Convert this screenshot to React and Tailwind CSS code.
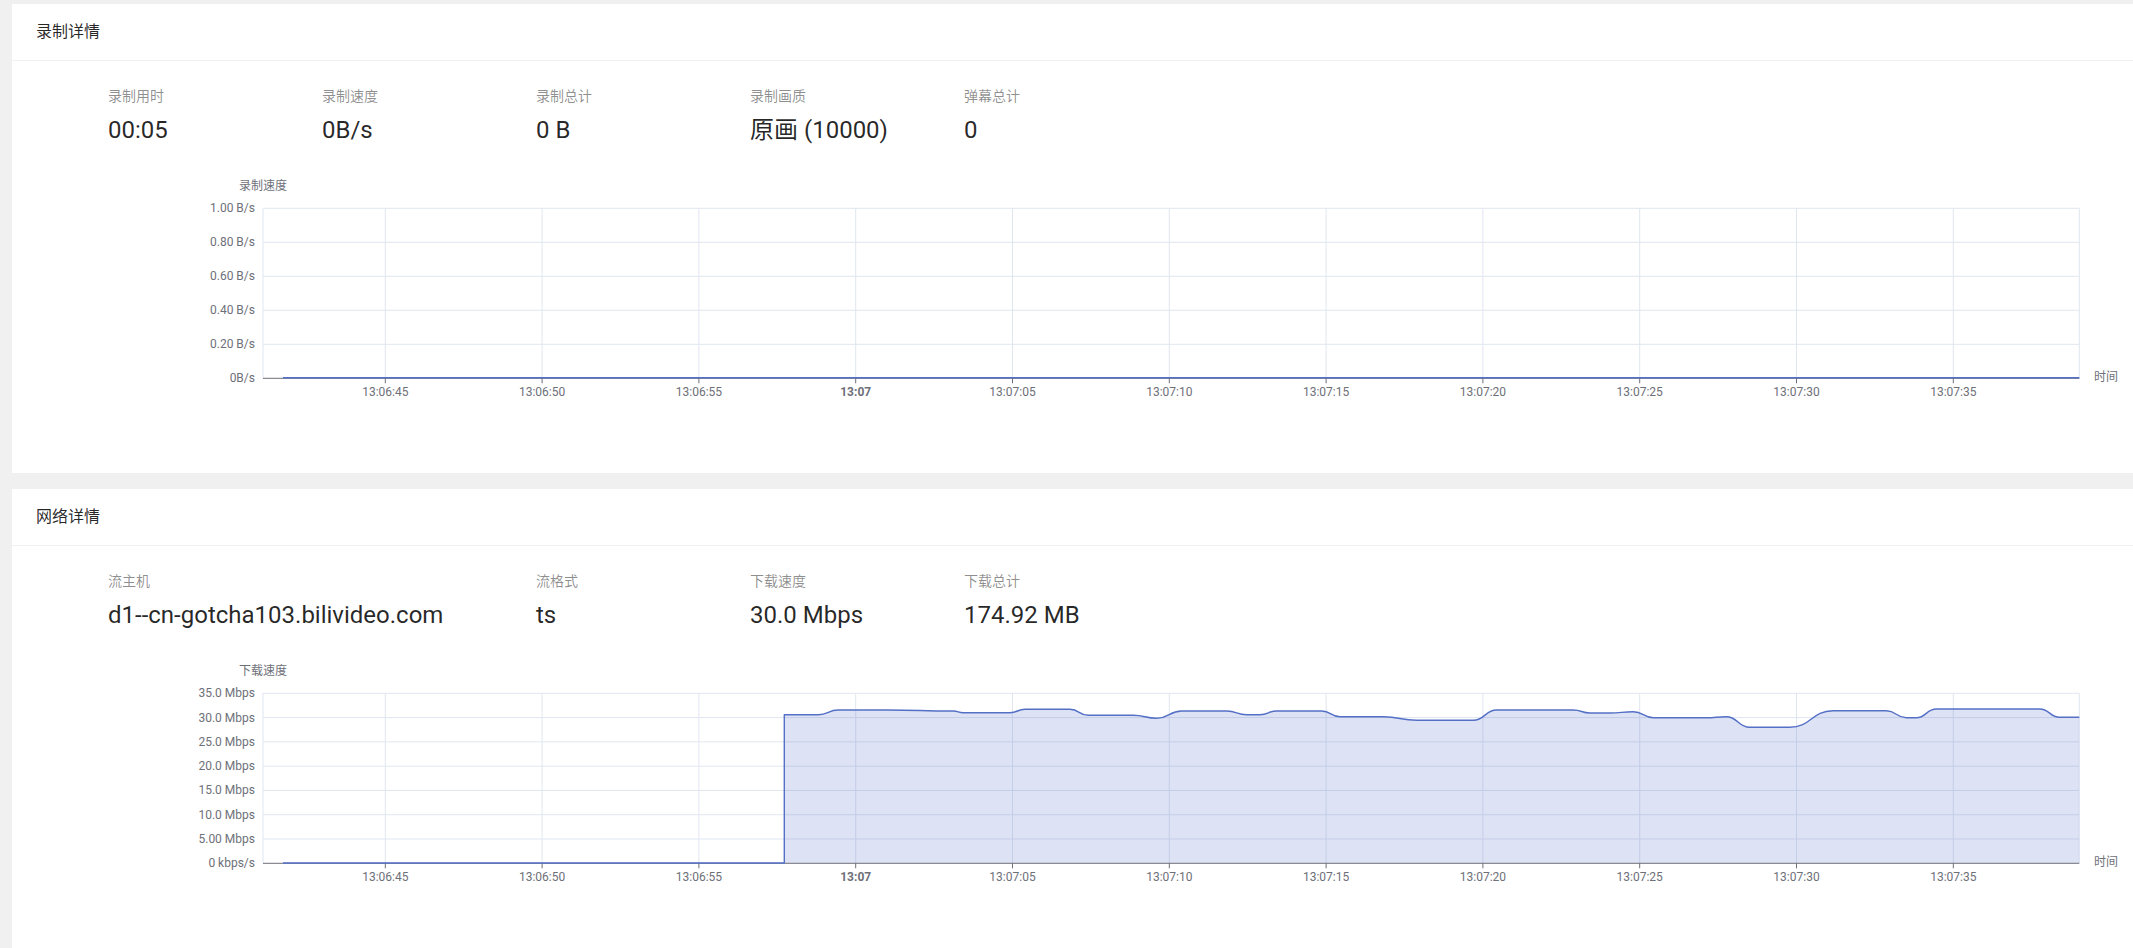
import React from "react";

const TICKS = ["13:06:45","13:06:50","13:06:55","13:07","13:07:05","13:07:10","13:07:15","13:07:20","13:07:25","13:07:30","13:07:35"];
const GL = 227, GR = 2043.3, GT = 59.3, GB = 229.3;
const tickX = (i) => 349.3 + i * 156.8;

const NODES = [
  [784.3,715.7],[818.3,715.7],[838.3,711],[886.7,711],[953.3,712],[963.3,713.7],[1010,713.7],
  [1025,710.3],[1070,710.3],[1088.3,716.3],[1133.3,716.3],[1156.7,719.3],[1181.7,712],[1226.7,712],
  [1246.7,715.7],[1260,715.7],[1276.7,712],[1321.7,712],[1340,717.7],[1383.3,717.7],[1416.7,721.3],
  [1473.3,721.3],[1496.7,711],[1573.3,711],[1590,714],[1610,714],[1633.3,712.7],[1653.3,718.7],
  [1706.3,718.7],[1726.3,717.7],[1749.7,728.3],[1789.7,728.3],[1833,711.7],[1886.3,711.7],
  [1906.3,718.7],[1916.3,718.7],[1936.3,710],[2039.7,710],[2059.7,718.3],[2079.3,718.3],
];

function buildLine() {
  let d = "M283 864 L784.3 864 L784.3 715.7";
  for (let i = 1; i < NODES.length; i++) {
    const [x0, y0] = NODES[i - 1];
    const [x1, y1] = NODES[i];
    if (y0 === y1) d += ` L${x1} ${y1}`;
    else {
      const m = (x0 + x1) / 2;
      d += ` C${m} ${y0} ${m} ${y1} ${x1} ${y1}`;
    }
  }
  return d;
}
const LINE = buildLine();
const AREA = LINE + " L2079.3 864 L283 864 Z";

function Chart({ name, yLabels, kind }) {
  const rows = yLabels.length - 1;
  const step = (GB - GT) / rows;
  return (
    <svg width="2073" height="300" viewBox="0 0 2073 300" className="block overflow-visible">
      {Array.from({ length: rows }).map((_, i) => (
        <line key={"h" + i} x1={GL} x2={GR} y1={GT + i * step} y2={GT + i * step} stroke="#E0E6F1" strokeWidth="1" />
      ))}
      {[GL, ...TICKS.map((_, i) => tickX(i)), GR].map((x, i) => (
        <line key={"v" + i} x1={x} x2={x} y1={GT} y2={GB} stroke="#E0E6F1" strokeWidth="1" />
      ))}
      {yLabels.map((l, i) => (
        <text key={"y" + i} x={219} y={GT + i * step} textAnchor="end" dominantBaseline="central" fontSize="12" fill="#6E7079">
          {l}
        </text>
      ))}
      <text x={GL} y={37} textAnchor="middle" dominantBaseline="central" fontSize="12" fill="#6E7079">{name}</text>
      {kind === "net" ? (
        <g transform="translate(-36,-635)">
          <path d={AREA} fill="#5470c6" fillOpacity="0.2" stroke="none" />
        </g>
      ) : null}
      <line x1={GL} x2={GR} y1={GB} y2={GB} stroke="#6E7079" strokeWidth="1" />
      {TICKS.map((_, i) => (
        <line key={"t" + i} x1={tickX(i)} x2={tickX(i)} y1={GB} y2={GB + 5} stroke="#6E7079" strokeWidth="1" />
      ))}
      {kind === "net" ? (
        <g transform="translate(-36,-635)">
          <path d={LINE} fill="none" stroke="#5470c6" strokeWidth="1.4" strokeLinejoin="round" />
        </g>
      ) : (
        <line x1={247} x2={GR} y1={GB - 0.5} y2={GB - 0.5} stroke="#5470c6" strokeWidth="1.5" />
      )}
      {TICKS.map((t, i) => (
        <text key={"x" + i} x={tickX(i)} y={GB + 13.5} textAnchor="middle" dominantBaseline="central" fontSize="12"
          fill="#6E7079" fontWeight={t === "13:07" ? 700 : 400}>
          {t}
        </text>
      ))}
      <text x={2058} y={GB - 1} dominantBaseline="central" fontSize="12" fill="#6E7079">时间</text>
    </svg>
  );
}

function Stat({ label, value, w }) {
  return (
    <div className={w}>
      <div className="mb-1 text-sm leading-[22px] text-black/45">{label}</div>
      <div className="text-2xl leading-[38px] text-black/85">{value}</div>
    </div>
  );
}

function Card({ title, children, className = "" }) {
  return (
    <div className={"bg-white " + className}>
      <div className="flex h-[57px] items-center border-b border-[#f0f0f0] px-6 text-base text-black/85">{title}</div>
      <div className="p-6">{children}</div>
    </div>
  );
}

export default function App() {
  return (
    <div className="min-h-screen overflow-hidden bg-[#f0f0f0] pl-3 pt-1 font-[Roboto,'Noto_Sans_CJK_SC',sans-serif]">
      <Card title="录制详情">
        <div className="flex pl-[72px]">
          <Stat w="w-[214px]" label="录制用时" value="00:05" />
          <Stat w="w-[214px]" label="录制速度" value="0B/s" />
          <Stat w="w-[214px]" label="录制总计" value="0 B" />
          <Stat w="w-[214px]" label="录制画质" value="原画 (10000)" />
          <Stat w="w-[214px]" label="弹幕总计" value="0" />
        </div>
        <Chart name="录制速度" kind="rec" yLabels={["1.00 B/s", "0.80 B/s", "0.60 B/s", "0.40 B/s", "0.20 B/s", "0B/s"]} />
      </Card>
      <Card title="网络详情" className="mt-4">
        <div className="flex pl-[72px]">
          <Stat w="w-[428px]" label="流主机" value="d1--cn-gotcha103.bilivideo.com" />
          <Stat w="w-[214px]" label="流格式" value="ts" />
          <Stat w="w-[214px]" label="下载速度" value="30.0 Mbps" />
          <Stat w="w-[214px]" label="下载总计" value="174.92 MB" />
        </div>
        <Chart name="下载速度" kind="net" yLabels={["35.0 Mbps", "30.0 Mbps", "25.0 Mbps", "20.0 Mbps", "15.0 Mbps", "10.0 Mbps", "5.00 Mbps", "0 kbps/s"]} />
      </Card>
    </div>
  );
}
